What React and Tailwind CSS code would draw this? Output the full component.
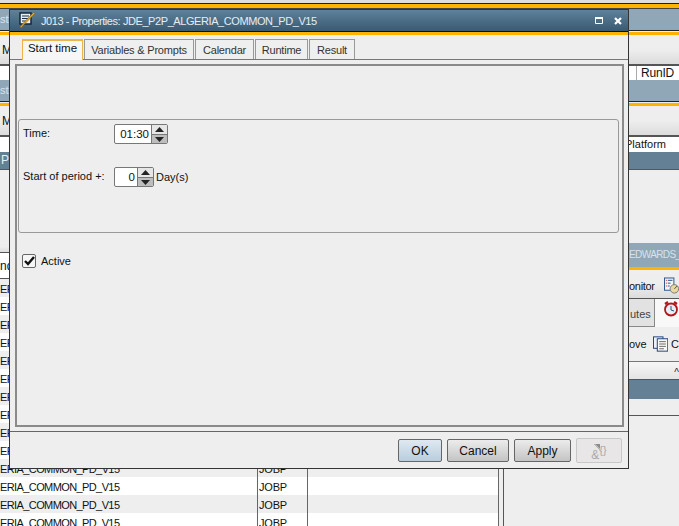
const font = "font-['Liberation_Sans',Arial,sans-serif]";

function Arrows() {
  return (
    <div className="flex h-full w-4 flex-col border-l border-[#777] bg-[#e6e6e6]">
      <div className="flex h-[9px] items-center justify-center">
        <svg width="9" height="5" viewBox="0 0 9 5">
          <path d="M4.5 0L9 5H0z" fill="#222" />
        </svg>
      </div>
      <div className="flex flex-1 items-center justify-center border-t border-[#777] bg-[#bdbdbd]">
        <svg width="9" height="5" viewBox="0 0 9 5">
          <path d="M0 0H9L4.5 5z" fill="#222" />
        </svg>
      </div>
    </div>
  );
}

function Spinner({ value, width }) {
  return (
    <div className={`flex h-[20px] overflow-hidden rounded-[2px] border border-[#777] bg-white ${width}`}>
      <div className="flex-1 pr-[2px] text-right text-[11.500px] leading-[19px] text-[#111]">{value}</div>
      <Arrows />
    </div>
  );
}

function Tab({ label, width }) {
  return (
    <div className={`h-[20px] border border-b-0 border-[#999] bg-[#efefef] text-center text-[11px] leading-[20px] tracking-[-0.2px] text-[#333] ${width}`}>
      {label}
    </div>
  );
}

function Btn({ label, width, primary }) {
  return (
    <div
      className={`h-[23px] rounded-[2px] border border-[#666] text-center text-[12px] leading-[22px] text-[#111] ${width} ${
        primary ? "bg-gradient-to-b from-[#dfe9f2] to-[#b9cddd]" : "bg-gradient-to-b from-[#ececec] to-[#c4c4c4]"
      }`}
    >
      {label}
    </div>
  );
}

function TitleIcon() {
  return (
    <svg width="17" height="17" viewBox="0 0 17 17">
      <rect x="1" y="1" width="11" height="11" fill="#e8edf2" stroke="#0f2740" strokeWidth="1.500" />
      <path d="M3 4h7M3 6.500h6M3 9h4" stroke="#14304a" />
      <path d="M16 1.500L5 12.500 2 16l-1-1 3-3.500L14.500 0.500z" fill="#e8b030" stroke="#8a6010" strokeWidth="0.7" />
    </svg>
  );
}

function MaxIcon() {
  return (
    <svg width="8" height="7" viewBox="0 0 8 7" className="mr-[11px]">
      <path d="M0.500 1.500h7v5h-7z" fill="none" stroke="#fff" />
      <path d="M0 0h8v2H0z" fill="#fff" />
    </svg>
  );
}

function CloseIcon() {
  return (
    <svg width="8" height="8" viewBox="0 0 8 8">
      <path d="M1 1l6 6M7 1L1 7" stroke="#fff" strokeWidth="2.200" />
    </svg>
  );
}

function ClockIcon() {
  return (
    <svg width="16" height="16" viewBox="0 0 16 16">
      <circle cx="8" cy="8.500" r="6" fill="#e8eef6" stroke="#b01818" strokeWidth="1.800" />
      <path d="M8 5v4l3 1" stroke="#30507a" fill="none" />
      <path d="M2 3l3-2M14 3l-3-2" stroke="#b01818" strokeWidth="2.200" />
    </svg>
  );
}

function MonitorIcon() {
  return (
    <svg width="16" height="18" viewBox="0 0 16 18">
      <rect x="0.500" y="0.500" width="10" height="13" fill="#f4f4f4" stroke="#25508a" />
      <path d="M2 3h1M2 6h1M2 9h1" stroke="#c02020" />
      <path d="M4 3h5M4 6h3M4 9h2" stroke="#25508a" />
      <circle cx="11" cy="12" r="4.500" fill="#e8d9a0" stroke="#777" />
      <path d="M11 12l3-3" stroke="#444" />
    </svg>
  );
}

function CopyIcon() {
  return (
    <svg width="16" height="16" viewBox="0 0 16 16">
      <rect x="0.500" y="0.500" width="10" height="12" fill="#eef2f6" stroke="#17407a" />
      <rect x="4.500" y="2.500" width="11" height="13" fill="#f8f8f8" stroke="#17407a" />
      <path d="M6.500 5.500h7M6.500 8h7M6.500 10.500h7M6.500 13h5" stroke="#666" />
    </svg>
  );
}

function BackTitle({ left }) {
  return (
    <div className="h-[21px] overflow-hidden bg-[#90a7b8] text-[11px] leading-[21px] text-[#d8e2ea]">
      {left}
    </div>
  );
}

function Toolbar({ height, children }) {
  return (
    <div className={`shrink-0 overflow-hidden bg-gradient-to-b from-[#f0eeee] via-[#eeeeee] to-[#dcdcdc] text-[11px] tracking-[-0.3px] text-[#111] ${height}`}>
      {children}
    </div>
  );
}

const rows = [0, 1, 2, 3, 4, 5, 6, 7, 8, 9, 10, 11, 12, 13];

export default function App() {
  return (
    <div className={`relative h-[526px] w-[679px] overflow-hidden bg-[#eeeeee] ${font}`}>
      {/* windows behind the dialog */}
      <div className="h-[3px] bg-[#dedede]" />
      <div className="h-px bg-[#222]" />
      <div className="h-[4px] bg-[#fdb300]" />
      <div className="h-px bg-[#444]" />
      <BackTitle left="sti" />
      <div className="h-px bg-[#222]" />
      <div className="h-px bg-[#eee]" />
      <div className="h-[3px] bg-[#fdb300]" />
      <Toolbar height="h-[29px]">
        <div className="pt-[8px] pl-[2px] text-[12px] leading-[14px]">M</div>
      </Toolbar>
      <div className="h-[2px] bg-[#555]" />
      <div className="flex h-[14px] bg-white text-[12px] leading-[14px] text-[#111]">
        <div className="w-[637px] border-r border-[#aaa]" />
        <div className="pl-[4px] tracking-[-0.2px]">RunID</div>
      </div>
      <BackTitle left="sti" />
      <div className="h-px bg-[#222]" />
      <div className="h-px bg-[#eee]" />
      <div className="h-[3px] bg-[#fdb300]" />
      <Toolbar height="h-[29px]">
        <div className="pt-[8px] pl-[2px] text-[12px] leading-[14px]">M</div>
      </Toolbar>
      <div className="h-[2px] bg-[#555]" />
      <div className="flex h-[15px] justify-end bg-white pr-[13px] text-[11px] leading-[15px] text-[#111]">
        <span>Platform</span>
      </div>
      <div className="h-[17px] bg-[#648094] pl-[1px] text-[12px] leading-[17px] text-[#e8eef2]">Pl</div>
      <div className="h-px bg-[#555]" />

      <div className="flex h-[356px]">
        <div className="flex w-[499px] flex-col overflow-hidden border-r border-[#666]">
          <div className="h-[72px] shrink-0 bg-[#eeeeee]" />
          <Toolbar height="h-[10px]" />
          <div className="h-px shrink-0 bg-[#555]" />
          <div className="h-[25px] shrink-0 bg-white text-[12px] leading-[27px] text-[#111]">nd</div>
          <div className="h-px shrink-0 bg-[#555]" />
          {rows.map((r) => (
            <div key={r} className={`flex h-[18px] shrink-0 text-[11px] leading-[20px] text-[#111] ${r % 2 ? "bg-white" : "bg-[#eeeeee]"}`}>
              <div className="w-[258px] overflow-hidden border-r border-[#666] tracking-[-0.6px] whitespace-nowrap">ERIA_COMMON_PD_V15</div>
              <div className="w-[50px] border-r border-[#666] pl-[1px] tracking-[-0.2px]">JOBP</div>
            </div>
          ))}
        </div>
        <div className="w-[4px]" />
        <div className="flex flex-1 flex-col overflow-hidden border-l border-[#555]">
          <div className="h-[73px]" />
          <div className="h-[24px] bg-[#90a7b8] pl-[125px] text-[10px] leading-[24px] tracking-[-0.6px] whitespace-nowrap text-[#d8e2ea]">EDWARDS_</div>
          <div className="h-[3px] bg-[#fdb300]" />
          <Toolbar height="h-[28px]">
            <div className="flex items-center pt-[7px] pl-[125px] leading-[14px]">
              <span className="w-[37px]">onitor</span>
              <MonitorIcon />
            </div>
          </Toolbar>
          <div className="h-px bg-[#555]" />
          <div className="flex h-[28px] text-[11px] text-[#444]">
            <div className="w-[153px] border-r border-b border-[#888] bg-[#e2e2e2] pl-[126px] leading-[30px]">utes</div>
            <div className="flex-1 bg-[#f8f8f8] pt-[2px] pl-[8px]">
              <ClockIcon />
            </div>
          </div>
          <div className="flex h-[34px] items-center bg-[#eeeeee] pl-[125px] text-[11px] text-[#111]">
            <span className="w-[25px]">ove</span>
            <CopyIcon />
            <span className="pl-[3px]">C</span>
          </div>
          <div className="h-px bg-[#777]" />
          <div className="flex h-[17px] justify-end bg-gradient-to-b from-[#f6f6f6] to-[#e4e4e4] pt-[3px] text-[10px] text-[#222]">^</div>
          <div className="h-px bg-[#555]" />
          <div className="h-[19px] bg-[#648094]" />
          <div className="h-[16px]" />
          <div className="h-px bg-[#555]" />
        </div>
      </div>

      {/* properties dialog */}
      <div className="absolute top-[9px] left-[9px] flex h-[460px] w-[620px] flex-col border border-[#333] bg-[#eeeeee]">
        <div className="flex h-[21px] items-center bg-gradient-to-b from-[#5f8199] to-[#385a73] pr-[6px] pl-[9px] text-[11px] text-[#e6edf2]">
          <TitleIcon />
          <span className="flex-1 pt-[1px] pl-[5px] tracking-[-0.42px] whitespace-nowrap">J013 - Properties: JDE_P2P_ALGERIA_COMMON_PD_V15</span>
          <MaxIcon />
          <CloseIcon />
        </div>
        <div className="h-px bg-[#111]" />
        <div className="h-[3px] bg-[#fdb300]" />
        <div className="flex h-[25px] items-end gap-px border-b border-[#777] pl-[12px]">
          <div className="-mb-px h-[21px] w-[61px] border-x border-t-2 border-[#eeb44c] bg-[#f7f7f7] text-center text-[11.500px] leading-[15px] text-[#111]">
            Start time
          </div>
          <Tab label="Variables & Prompts" width="w-[110px]" />
          <Tab label="Calendar" width="w-[59px]" />
          <Tab label="Runtime" width="w-[53px]" />
          <Tab label="Result" width="w-[46px]" />
        </div>
        <div className="mt-[4px] mr-[4px] ml-[5px] flex h-[363px] flex-col border-2 border-[#8a8a8a] pt-[53px] pr-[3px] pl-[1px]">
          <div className="flex h-[114px] flex-col rounded-[3px] border border-[#999] px-[4px] pt-[4px] text-[11px] text-[#111]">
            <div className="flex h-[20px] items-center">
              <span className="w-[91px] pb-[2px]">Time:</span>
              <Spinner value="01:30" width="w-[54px]" />
            </div>
            <div className="mt-[23px] flex h-[20px] items-center">
              <span className="w-[91px] pb-[2px] whitespace-nowrap">Start of period +:</span>
              <Spinner value="0" width="w-[40px]" />
              <span className="pl-[2px]">Day(s)</span>
            </div>
          </div>
          <div className="mt-[20px] flex items-center gap-[5px] pl-[4px] text-[11px] text-[#111]">
            <div className="flex h-[14px] w-[14px] items-center justify-center rounded-[2px] border border-[#666] bg-[#f6f6f6]">
              <svg width="11" height="10" viewBox="0 0 11 10">
                <path d="M1 5l3 3 6-7" fill="none" stroke="#111" strokeWidth="2.400" />
              </svg>
            </div>
            <span>Active</span>
          </div>
        </div>
        <div className="mt-[4px] h-px bg-[#666]" />
        <div className="flex items-center justify-end gap-[5px] pt-[6px] pr-[6px]">
          <Btn label="OK" width="w-[44px]" primary />
          <Btn label="Cancel" width="w-[62px]" />
          <Btn label="Apply" width="w-[57px]" />
          <div className="relative flex h-[25px] w-[46px] items-center justify-center rounded-[2px] border border-[#c8c8c8] bg-[#e8e6e6] text-[12px] text-[#a8a8a8]">
            <span className="pt-[8px]">&amp;</span>
            <span className="pb-[1px] text-[11px]">{"{}"}</span>
            <svg width="10" height="10" viewBox="0 0 10 10" className="absolute top-[4px] left-[16px]">
              <path d="M1 1l8 8" stroke="#b4b4b4" />
              <path d="M2 1h5v5z" fill="#8c8c8c" />
            </svg>
          </div>
        </div>
      </div>
    </div>
  );
}
